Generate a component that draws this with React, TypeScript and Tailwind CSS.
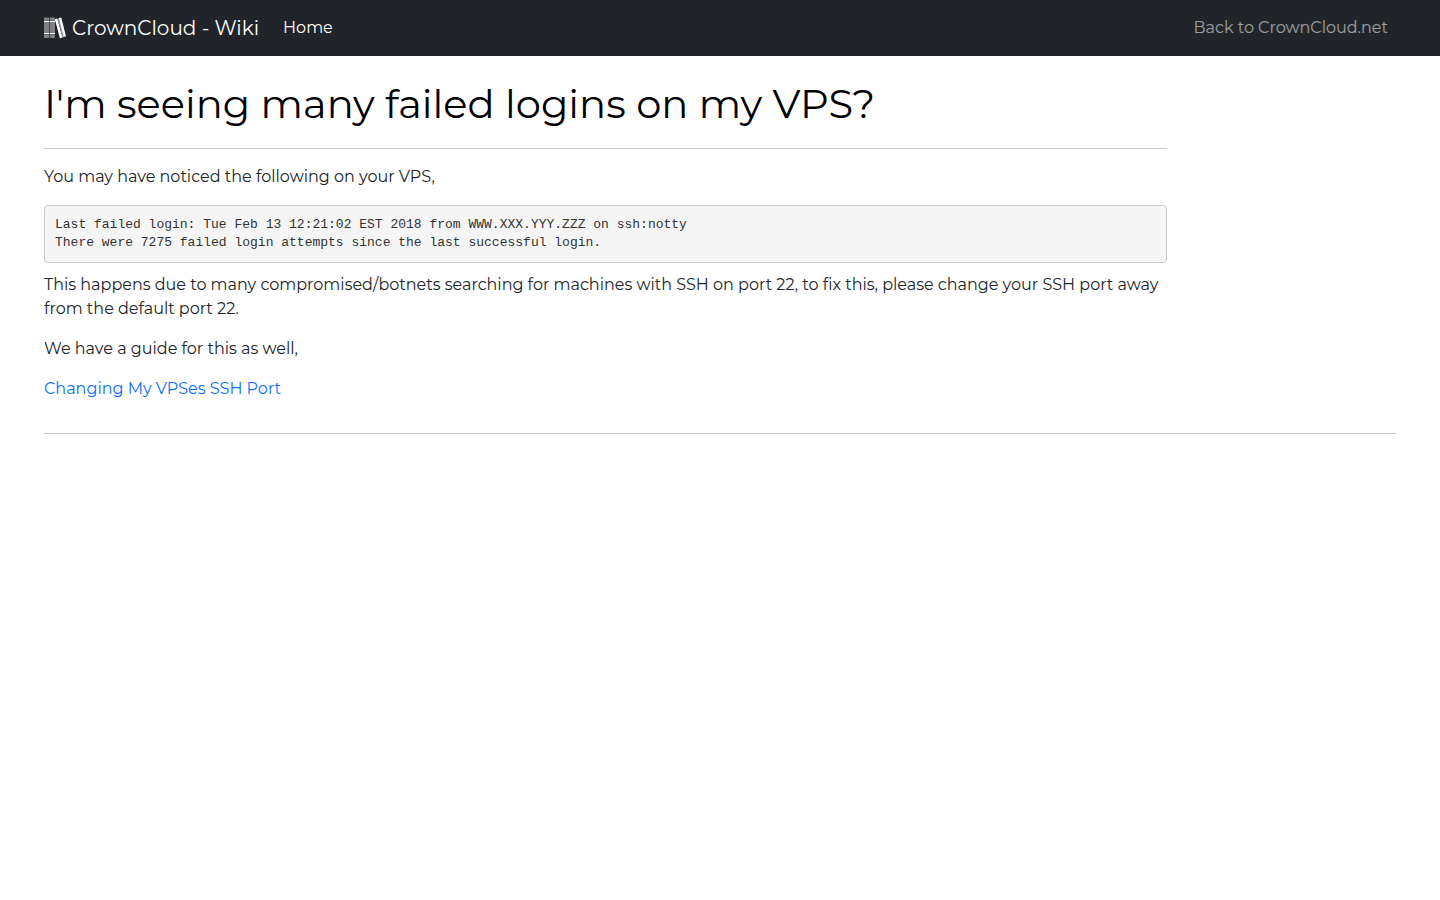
const failedLogins = `Last failed login: Tue Feb 13 12:21:02 EST 2018 from WWW.XXX.YYY.ZZZ on ssh:notty
There were 7275 failed login attempts since the last successful login.`;

/** Two grey upright books with two white ones leaning on them. */
function BooksIcon() {
  return (
    <svg width="22" height="22" viewBox="0 0 22 22" aria-hidden="true" className="shrink-0">
      <g fill="#7f8182">
        <rect x="0" y="0.5" width="5.2" height="3.2" rx="0.5" />
        <rect x="0" y="5" width="5.2" height="11" />
        <rect x="0" y="17.2" width="5.2" height="3.8" rx="0.5" />
        <rect x="5.8" y="0.5" width="5.2" height="3.2" rx="0.5" />
        <rect x="5.8" y="5" width="5.2" height="11" />
        <rect x="5.8" y="17.2" width="5.2" height="3.8" rx="0.5" />
      </g>
      <path fill="#fff" d="M0 4h5.2v1H0zM5.8 4h5.2v1H5.8zM0 16h5.2v1H0zM5.8 16h5.2v1H5.8z" />
      <path fill="#fff" d="M10.8 2.2 13.4 1.5 18.5 20.5 15.9 21.2z" />
      <path fill="#8f9192" d="M13.4 1.6 15.1 1.1 20.1 19.9 18.4 20.4z" />
      <path fill="#fff" d="M14.9 1 17.2 0.4 22 19.2 19.6 19.9z" />
    </svg>
  );
}

export default function App() {
  return (
    <div className="min-h-screen bg-white font-['Montserrat','Open_Sans',sans-serif] text-base text-[#212529]">
      <nav className="flex h-14 items-center bg-[#212529] px-11">
        <a href="#" className="mr-6 flex items-center gap-[6px] text-xl text-white">
          <BooksIcon />
          CrownCloud - Wiki
        </a>
        <a href="#" className="text-white">
          Home
        </a>
        <a href="#" className="mr-2 ml-auto text-white/55 hover:text-white/75">
          Back to CrownCloud.net
        </a>
      </nav>

      <div className="px-11 pt-6">
        <div className="-mx-3 flex">
          <main className="w-10/12 px-3">
            <h1 className="text-[40px] leading-[48px] text-black">
              I'm seeing many failed logins on my VPS?
            </h1>
            <hr className="mt-5 mb-4 border-[#c8c9ca]" />
            <p className="mb-4">You may have noticed the following on your VPS,</p>
            <pre className="mb-[10px] overflow-auto rounded border border-[#cccccc] bg-[#f5f5f5] p-[10px] font-['Liberation_Mono',monospace] text-[13px] leading-[18px] text-[#333333]">
              {failedLogins}
            </pre>
            <p className="mb-4">
              This happens due to many compromised/botnets searching for machines with SSH on port
              22, to fix this, please change your SSH port away from the default port 22.
            </p>
            <p className="mb-4">We have a guide for this as well,</p>
            <p className="mb-4">
              <a href="#" className="text-[#0d6efd] hover:underline">
                Changing My VPSes SSH Port
              </a>
            </p>
          </main>
        </div>
        <hr className="my-4 border-[#c8c9ca]" />
      </div>
    </div>
  );
}
